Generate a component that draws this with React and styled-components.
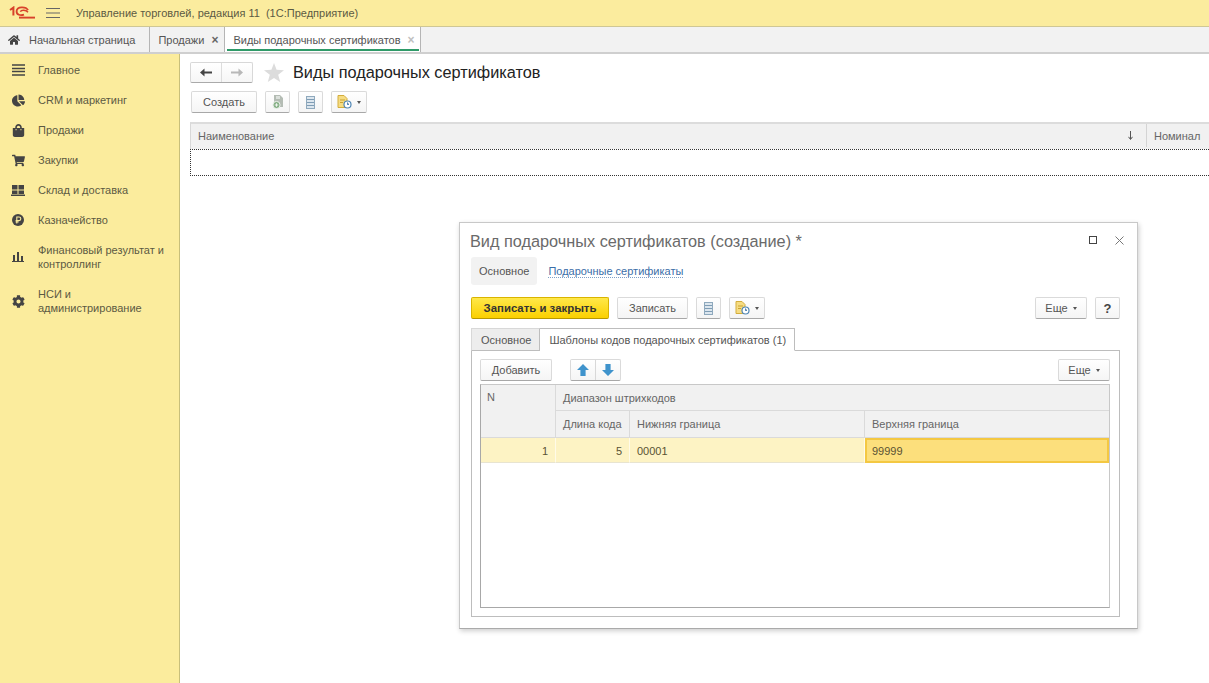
import { createGlobalStyle, styled } from "styled-components";
import { FaChartPie, FaCog, FaHome, FaShoppingBag, FaShoppingCart } from "react-icons/fa";

const GlobalStyle = createGlobalStyle`
  html, body {
    margin: 0;
    padding: 0;
    background: #fff;
  }
  body {
    font-family: "Liberation Sans", Arial, sans-serif;
    font-size: 11px;
    color: #4d4d4d;
  }
`;

const Logo = () => (
  <svg width="26" height="13" viewBox="0 0 26 13" fill="none">
    <path d="M1 4 L4.4 1.6 V9.5" stroke="#d8422a" strokeWidth="2" />
    <path d="M19 4.2 C17 .2 8 .2 7.6 5 C7.3 9 11.5 9.8 15 8.6" stroke="#d8422a" strokeWidth="1.8" />
    <path d="M19 6.2 C17 3.6 12 3.6 11.4 5.8" stroke="#d8422a" strokeWidth="1.4" />
    <path d="M10 11.6 H26" stroke="#d8422a" strokeWidth="1.9" />
  </svg>
);

const Burger = () => (
  <svg width="14" height="10" viewBox="0 0 14 10">
    <path d="M0 .5H14M0 5H14M0 9.5H14" stroke="#666" strokeWidth="1" />
  </svg>
);

const MainIcon = () => (
  <svg width="13" height="12" viewBox="0 0 13 12">
    <path d="M0 1H13M0 4.5H13M0 7.5H13M0 11H13" stroke="#444" strokeWidth="1.6" />
  </svg>
);

const StockIcon = () => (
  <svg width="14" height="11" viewBox="0 0 14 11">
    <path d="M1 0H6.5V4.5H1ZM7.5 0H13V4.5H7.5ZM1 5.5H6.5V9H1ZM7.5 5.5H13V9H7.5ZM0 9.6H14V11H0Z" fill="#444" />
  </svg>
);

const TreasuryIcon = () => (
  <svg width="12" height="12" viewBox="0 0 12 12">
    <circle cx="6" cy="6" r="6" fill="#444" />
    <path d="M4.8 9.5V3H7a1.7 1.7 0 0 1 0 3.6H3.6M3.6 8H6.6" stroke="#fbec9d" strokeWidth="1.1" fill="none" />
  </svg>
);

const FinanceIcon = () => (
  <svg width="12" height="10" viewBox="0 0 12 10">
    <path d="M1 3H3V9H1ZM5 0H7V9H5ZM9 4H11V9H9ZM0 9H12V10H0Z" fill="#444" />
  </svg>
);

const ListIcon = () => (
  <svg width="9" height="13" viewBox="0 0 9 13">
    <rect x=".5" y=".5" width="8" height="12" fill="#dce6ee" stroke="#8fa9bd" />
    <path d="M1 3.5H8M1 6.5H8M1 9.5H8" stroke="#7f9db5" />
  </svg>
);

const ReportIcon = () => (
  <svg width="15" height="14" viewBox="0 0 15 14">
    <path d="M1 .5H7L10 3.5V12.5H1Z" fill="#f6dc82" stroke="#d3ad3c" />
    <path d="M3 5H8M3 7.5H6" stroke="#c9a233" />
    <circle cx="10.5" cy="9.5" r="3.5" fill="#fff" stroke="#4f86b5" strokeWidth="1.2" />
    <path d="M10.5 7.5V9.5H12" stroke="#4f86b5" />
  </svg>
);

const CreateCopyIcon = () => (
  <svg width="12" height="14" viewBox="0 0 12 14">
    <path d="M2 0H8L11 3V12H2Z" fill="#b4bcb4" />
    <path d="M4 1H8V4H4Z" fill="#dbe0db" />
    <circle cx="4.5" cy="10" r="3.6" fill="#86b086" stroke="#eef3ee" />
    <path d="M2.8 10H6.2M4.5 8.3V11.7" stroke="#eef3ee" />
  </svg>
);

const StarIcon = () => (
  <svg width="20" height="19" viewBox="0 0 20 19">
    <path d="M10 0L12.6 6.8L20 7.2L14.2 11.8L16.2 19L10 15L3.8 19L5.8 11.8L0 7.2L7.4 6.8Z" fill="#dcdcdc" />
  </svg>
);

const BackIcon = () => (
  <svg width="12" height="9" viewBox="0 0 12 9">
    <path d="M0 4.5L4.5 0.5V3.6H12V5.4H4.5V8.5Z" fill="#444" />
  </svg>
);

const ForwardIcon = () => (
  <svg width="12" height="9" viewBox="0 0 12 9">
    <path d="M12 4.5L7.5 0.5V3.6H0V5.4H7.5V8.5Z" fill="#b8b8b8" />
  </svg>
);

const SortIcon = () => (
  <svg width="5" height="9" viewBox="0 0 5 9">
    <path d="M2.5 0V8M.5 5.8L2.5 8.5L4.5 5.8" stroke="#555" fill="none" />
  </svg>
);

const UpIcon = () => (
  <svg width="12" height="12" viewBox="0 0 12 12">
    <path d="M6 0L12 6H8.6V12H3.4V6H0Z" fill="#3f93cc" />
  </svg>
);

const DownIcon = () => (
  <svg width="12" height="12" viewBox="0 0 12 12">
    <path d="M6 12L12 6H8.6V0H3.4V6H0Z" fill="#3f93cc" />
  </svg>
);

const Caret = styled.span`
  display: inline-block;
  width: 0;
  height: 0;
  border-left: 2.5px solid transparent;
  border-right: 2.5px solid transparent;
  border-top: 3px solid #555;
`;

const Page = styled.div`
  position: relative;
  display: grid;
  grid-template-rows: 27px 27px 1fr;
  width: 100%;
  height: 683px;
  overflow: hidden;
`;

const TopBar = styled.header`
  display: flex;
  align-items: center;
  padding: 0 0 1px 9px;
  background: #fbec9e;
  border-bottom: 1px solid #cfc795;
  box-sizing: border-box;
`;

const Hamburger = styled.span`
  display: flex;
  margin-left: 11px;
`;

const AppTitle = styled.span`
  margin-left: 16px;
  font-size: 11px;
  color: #5b5a43;
`;

const TabBar = styled.nav`
  display: flex;
  background: #f2f2f2;
  border-bottom: 2px solid #cfcfcf;
  box-sizing: border-box;
`;

const PageTab = styled.div`
  position: relative;
  display: flex;
  align-items: center;
  gap: ${(p) => p.$gap}px;
  padding: ${(p) => p.$padding};
  border-right: 1px solid #b5b5b5;
  background: ${(p) => (p.$active ? "#fff" : "transparent")};
  font-size: 11px;
  color: #555;

  &::after {
    content: "";
    display: ${(p) => (p.$active ? "block" : "none")};
    position: absolute;
    left: 2px;
    right: 1px;
    bottom: 1px;
    height: 2px;
    background: #2e9a68;
  }
`;

const CloseMark = styled.span`
  font-size: 12px;
  font-weight: 700;
  color: ${(p) => (p.$muted ? "#c0c0c0" : "#666")};
`;

const Body = styled.div`
  display: grid;
  grid-template-columns: 180px 1fr;
  min-height: 0;
`;

const Sidebar = styled.aside`
  padding-top: 1px;
  background: #fbec9d;
  border-right: 1px solid #c8bf7b;
  box-sizing: border-box;
`;

const SideItem = styled.div`
  display: grid;
  grid-template-columns: 38px 1fr;
  align-items: center;
  padding: 8px 10px 8px 0;
  line-height: 14px;
  font-size: 11px;
  color: #5b5a43;
`;

const SideIcon = styled.span`
  display: flex;
  justify-content: center;
  padding-right: 2px;
  font-size: 13px;
  color: #444;
`;

const Main = styled.main`
  min-width: 0;
  padding: 8px 0 0 10px;
`;

const TitleRow = styled.div`
  display: flex;
  align-items: center;
  height: 21px;
`;

const NavGroup = styled.div`
  display: flex;
  width: 63px;
  height: 21px;
  box-sizing: border-box;
  background: linear-gradient(#fff, #f6f6f6);
  border: 1px solid #d8d8d8;
  border-bottom-color: #aaa;
  border-radius: 2px;
`;

const NavArrow = styled.span`
  flex: 1;
  display: flex;
  align-items: center;
  justify-content: center;
  border-right: ${(p) => (p.$divided ? "1px solid #ddd" : "none")};
`;

const Star = styled.span`
  display: flex;
  margin-left: 11px;
`;

const PageTitle = styled.h1`
  margin: 0 0 0 9px;
  font-size: 16.3px;
  font-weight: 400;
  color: #222;
`;

const Toolbar = styled.div`
  display: flex;
  align-items: center;
  gap: ${(p) => p.$gap || 8}px;
  margin: ${(p) => p.$margin || 0};
`;

const Button = styled.button`
  display: flex;
  align-items: center;
  justify-content: center;
  gap: 5px;
  width: ${(p) => p.$width}px;
  height: 22px;
  padding: 0;
  box-sizing: border-box;
  font-family: inherit;
  font-size: 11px;
  color: #555;
  background: linear-gradient(#fff, #f5f5f5);
  border: 1px solid #dadada;
  border-bottom: 1px solid #a8a8a8;
  border-radius: 2px;
`;

const PrimaryButton = styled(Button)`
  font-size: 11.4px;
  font-weight: 700;
  color: #333;
  background: linear-gradient(#ffe84a, #fbd000);
  border-color: #d9b400;
  border-bottom-color: #b89800;
`;

const HelpButton = styled(Button)`
  font-size: 13px;
  font-weight: 700;
  color: #444;
`;

const ButtonGroup = styled.div`
  display: flex;
  width: ${(p) => p.$width}px;
  height: 22px;
  box-sizing: border-box;
  background: linear-gradient(#fff, #f5f5f5);
  border: 1px solid #dadada;
  border-bottom-color: #a8a8a8;
  border-radius: 2px;
`;

const GroupCell = styled.span`
  flex: 1;
  display: flex;
  align-items: center;
  justify-content: center;
  border-right: ${(p) => (p.$divided ? "1px solid #d8d8d8" : "none")};
`;

const Spacer = styled.div`
  flex: 1;
`;

const ListTable = styled.div`
  margin-top: 9px;
`;

const ListHeader = styled.div`
  display: grid;
  grid-template-columns: 1fr 63px;
  height: 27px;
  padding-bottom: 2px;
  box-sizing: border-box;
  background: #f1f1f1;
  border-top: 2px solid #dcdcdc;
  border-left: 1px solid #d8d8d8;
`;

const ListHeaderCell = styled.div`
  display: flex;
  align-items: center;
  justify-content: space-between;
  padding: 0 ${(p) => (p.$sorted ? "13px" : "0")} 0 7px;
  font-size: 11px;
  color: #666;
  border-left: ${(p) => (p.$divided ? "1px solid #d4d4d4" : "none")};
`;

const EmptyRow = styled.div`
  height: 27px;
  box-sizing: border-box;
  border: 1px dotted #333;
  border-right: none;
`;

const Dialog = styled.section`
  position: absolute;
  top: 222px;
  left: 459px;
  display: flex;
  flex-direction: column;
  width: 679px;
  height: 407px;
  padding: 0 17px 11px 11px;
  box-sizing: border-box;
  background: #fff;
  border: 1px solid #c8c8c8;
  border-bottom-color: #aaa;
  box-shadow: 1px 2px 5px rgba(0, 0, 0, 0.2);
`;

const DialogHeader = styled.div`
  display: flex;
  align-items: center;
  justify-content: space-between;
  height: 34px;
`;

const DialogTitle = styled.h2`
  margin: 2px 0 0 -1px;
  font-size: 16.3px;
  font-weight: 400;
  color: #6a6a6a;
`;

const WindowControls = styled.div`
  display: flex;
  align-items: center;
  gap: 18px;
  margin-right: -4px;
`;

const Maximize = styled.span`
  width: 6px;
  height: 6px;
  border: 1px solid #444;
`;

const SubTabs = styled.div`
  display: flex;
  align-items: center;
  gap: 11px;
  height: 28px;
`;

const SubTabActive = styled.span`
  display: flex;
  align-items: center;
  height: 28px;
  padding: 0 8px;
  background: #f2f2f2;
  border-radius: 3px;
  font-size: 11px;
  color: #555;
`;

const SubTabLink = styled.a`
  font-size: 11px;
  color: #3b6ea8;
  border-bottom: 1px dotted #7fa0c8;
`;

const TabStrip = styled.div`
  display: flex;
  align-items: stretch;
  height: 23px;
  margin-top: 9px;
`;

const FormTab = styled.div`
  position: relative;
  z-index: 1;
  display: flex;
  align-items: center;
  padding: 0 8px 0 9px;
  font-size: 11px;
  color: #555;
  background: ${(p) => (p.$active ? "#fff" : "#ededed")};
  border: 1px solid #bdbdbd;
  border-bottom: ${(p) => (p.$active ? "1px solid #fff" : "1px solid #bdbdbd")};
  border-left: ${(p) => (p.$active ? "none" : "1px solid #d8d8d8")};
  border-top-color: ${(p) => (p.$active ? "#bdbdbd" : "#d8d8d8")};
`;

const TabPanel = styled.div`
  flex: 1;
  display: flex;
  flex-direction: column;
  margin-top: -1px;
  padding: 8px 9px 8px 8px;
  border: 1px solid #bdbdbd;
  min-height: 0;
`;

const Grid = styled.div`
  flex: 1;
  margin-top: 3px;
  border: 1px solid #a8a8a8;
  border-top-color: #c8c8c8;
  border-right-color: #c8c8c8;
  min-height: 0;
`;

const GridRows = styled.div`
  display: grid;
  grid-template-columns: 75px 74px 235px 1fr;
  grid-template-rows: 26px 27px 25px;
`;

const HeadCell = styled.div`
  grid-column: ${(p) => p.$col};
  grid-row: ${(p) => p.$row};
  display: flex;
  align-items: ${(p) => (p.$top ? "flex-start" : "center")};
  padding: ${(p) => (p.$top ? "6px 6px" : "0 7px")};
  background: #f1f1f1;
  font-size: 11px;
  color: #666;
  border-right: ${(p) => (p.$last ? "none" : "1px solid #dadada")};
  border-bottom: 1px solid #dadada;
`;

const DataCell = styled.div`
  display: flex;
  align-items: center;
  justify-content: ${(p) => (p.$right ? "flex-end" : "flex-start")};
  padding: 1px 7px 0;
  font-size: 11px;
  color: #5a5233;
  background: #fdf3c4;
  border-right: 1px solid #fffbe8;
  border-bottom: 1px solid #e8e4d0;
`;

const ActiveCell = styled(DataCell)`
  background: #fcdf7c;
  border: 2px solid #f4c842;
  padding: 0 5px;
`;

const sideItems = [
  { label: "Главное", icon: <MainIcon /> },
  { label: "CRM и маркетинг", icon: <FaChartPie /> },
  { label: "Продажи", icon: <FaShoppingBag /> },
  { label: "Закупки", icon: <FaShoppingCart /> },
  { label: "Склад и доставка", icon: <StockIcon /> },
  { label: "Казначейство", icon: <TreasuryIcon /> },
  { label: "Финансовый результат и контроллинг", icon: <FinanceIcon /> },
  { label: "НСИ и администрирование", icon: <FaCog /> },
];

const App = () => {
  return (
    <Page>
      <GlobalStyle />
      <TopBar>
        <Logo />
        <Hamburger>
          <Burger />
        </Hamburger>
        <AppTitle>Управление торговлей, редакция 11 &nbsp;(1С:Предприятие)</AppTitle>
      </TopBar>
      <TabBar>
        <PageTab $gap={9} $padding="0 14px 0 8px">
          <FaHome size={12} color="#444" />
          Начальная страница
        </PageTab>
        <PageTab $gap={7} $padding="0 6px 0 8px">
          Продажи <CloseMark>×</CloseMark>
        </PageTab>
        <PageTab $active $gap={7} $padding="0 5px 0 8px">
          Виды подарочных сертификатов <CloseMark $muted>×</CloseMark>
        </PageTab>
      </TabBar>
      <Body>
        <Sidebar>
          {sideItems.map((item) => (
            <SideItem key={item.label}>
              <SideIcon>{item.icon}</SideIcon>
              <span>{item.label}</span>
            </SideItem>
          ))}
        </Sidebar>
        <Main>
          <TitleRow>
            <NavGroup>
              <NavArrow $divided>
                <BackIcon />
              </NavArrow>
              <NavArrow>
                <ForwardIcon />
              </NavArrow>
            </NavGroup>
            <Star>
              <StarIcon />
            </Star>
            <PageTitle>Виды подарочных сертификатов</PageTitle>
          </TitleRow>
          <Toolbar $margin="8px 0 0 1px">
            <Button $width={66}>Создать</Button>
            <Button $width={25}>
              <CreateCopyIcon />
            </Button>
            <Button $width={25}>
              <ListIcon />
            </Button>
            <Button $width={36}>
              <ReportIcon />
              <Caret />
            </Button>
          </Toolbar>
          <ListTable>
            <ListHeader>
              <ListHeaderCell $sorted>
                Наименование <SortIcon />
              </ListHeaderCell>
              <ListHeaderCell $divided>Номинал</ListHeaderCell>
            </ListHeader>
            <EmptyRow />
          </ListTable>
        </Main>
      </Body>

      <Dialog>
        <DialogHeader>
          <DialogTitle>Вид подарочных сертификатов (создание) *</DialogTitle>
          <WindowControls>
            <Maximize />
            <svg width="9" height="9" viewBox="0 0 9 9">
              <path d="M.5 .5L8.5 8.5M8.5 .5L.5 8.5" stroke="#777" />
            </svg>
          </WindowControls>
        </DialogHeader>
        <SubTabs>
          <SubTabActive>Основное</SubTabActive>
          <SubTabLink>Подарочные сертификаты</SubTabLink>
        </SubTabs>
        <Toolbar $margin="12px 0 0 0">
          <PrimaryButton $width={138}>Записать и закрыть</PrimaryButton>
          <Button $width={71}>Записать</Button>
          <Button $width={25}>
            <ListIcon />
          </Button>
          <Button $width={36}>
            <ReportIcon />
            <Caret />
          </Button>
          <Spacer />
          <Button $width={52}>
            Еще <Caret />
          </Button>
          <HelpButton $width={25}>?</HelpButton>
        </Toolbar>
        <TabStrip>
          <FormTab>Основное</FormTab>
          <FormTab $active>Шаблоны кодов подарочных сертификатов (1)</FormTab>
        </TabStrip>
        <TabPanel>
          <Toolbar $gap={18}>
            <Button $width={72}>Добавить</Button>
            <ButtonGroup $width={51}>
              <GroupCell $divided>
                <UpIcon />
              </GroupCell>
              <GroupCell>
                <DownIcon />
              </GroupCell>
            </ButtonGroup>
            <Spacer />
            <Button $width={52}>
              Еще <Caret />
            </Button>
          </Toolbar>
          <Grid>
            <GridRows>
              <HeadCell $col="1" $row="1 / 3" $top>
                N
              </HeadCell>
              <HeadCell $col="2 / 5" $row="1" $last>
                Диапазон штрихкодов
              </HeadCell>
              <HeadCell $col="2" $row="2">
                Длина кода
              </HeadCell>
              <HeadCell $col="3" $row="2">
                Нижняя граница
              </HeadCell>
              <HeadCell $col="4" $row="2" $last>
                Верхняя граница
              </HeadCell>
              <DataCell $right>1</DataCell>
              <DataCell $right>5</DataCell>
              <DataCell>00001</DataCell>
              <ActiveCell>99999</ActiveCell>
            </GridRows>
          </Grid>
        </TabPanel>
      </Dialog>
    </Page>
  );
};

export default App;
